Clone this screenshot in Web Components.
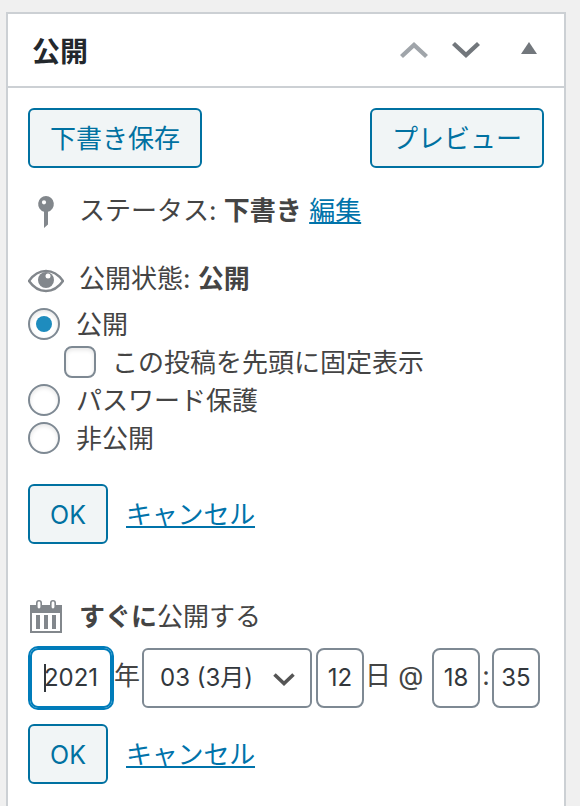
<!DOCTYPE html>
<html lang="ja">
<head>
<meta charset="utf-8">
<title>公開</title>
<style>
    html, body{
        height:100%;
        margin:0;
    }
    body{
        background:#f0f0f0;
        color:#444;
        font:26px/38px Inter, "Noto Sans CJK JP", sans-serif;
        overflow:hidden;
    }
</style>
</head>
<body>
<publish-box>
    <span slot="title">公開</span>
    <button-row>
        <wp-button style="--width:174px">下書き保存</wp-button>
        <wp-button style="--width:174px">プレビュー</wp-button>
    </button-row>
    <misc-row icon="key" style="margin-top:23px">ステータス: <b>下書き</b> <wp-link>編集</wp-link></misc-row>
    <misc-row icon="eye" style="margin-top:28px">公開状態: <b>公開</b></misc-row>
    <choice-item checked style="margin-top:6px">公開</choice-item>
    <choice-item type="checkbox">この投稿を先頭に固定表示</choice-item>
    <choice-item>パスワード保護</choice-item>
    <choice-item>非公開</choice-item>
    <confirm-row style="margin-top:27px"></confirm-row>
    <misc-row icon="calendar" style="margin-top:53px"><b>すぐに</b>公開する</misc-row>
    <date-row></date-row>
    <confirm-row style="margin-top:16px"></confirm-row>
</publish-box>
<script>
// Clase base: cada componente solo define su template y sus estilos
class BaseElement extends HTMLElement{
    constructor(){
        super();
        this.attachShadow({mode:"open"});
    }
    connectedCallback(){
        const template = document.createElement('template');
        template.innerHTML = `${this.getStyles()}${this.getTemplate()}`;
        this.shadowRoot.appendChild(template.content.cloneNode(true));
    }
}

class PublishBox extends BaseElement{
    getTemplate(){
        return `
            <header>
                <h2><slot name="title"></slot></h2>
                <svg class="up" width="28" height="18" viewBox="0 0 28 18"><path d="M1.5 15.500 14 4 26.500 15.500"/></svg>
                <svg class="down" width="28" height="18" viewBox="0 0 28 18"><path d="M1.5 2.500 14 14 26.500 2.500"/></svg>
                <svg class="toggle" width="16" height="12" viewBox="0 0 16 12"><path d="M8 0 16 12H0z"/></svg>
            </header>
            <section><slot></slot></section>
        `;
    }
    getStyles(){
        return `
        <style>
            :host{
                display:block;
                box-sizing:border-box;
                width:560px;
                height:820px;
                margin:0 0 0 6px;
                border:2px solid #ccd0d4;
                background:#fff;
                transform:translateY(12px);
            }
            header{
                display:flex;
                align-items:center;
                height:72px;
                padding:0 27px 0 24px;
                border-bottom:2px solid #ccd0d4;
            }
            h2{
                flex:1;
                margin:0;
                padding-top:4px;
                color:#23282d;
                font-size:28px;
                font-weight:700;
            }
            path{
                fill:none;
                stroke:#72777c;
                stroke-width:4.4;
            }
            .up path{
                stroke:#a0a5aa;
            }
            .down{
                margin:0 41px 0 24px;
            }
            .toggle{
                margin-top:-4px;
            }
            .toggle path{
                fill:#72777c;
                stroke:none;
            }
            section{
                padding:20px 20px 0;
            }
        </style>
        `;
    }
}
customElements.define('publish-box', PublishBox);

class ButtonRow extends BaseElement{
    getTemplate(){
        return `<slot></slot>`;
    }
    getStyles(){
        return `
        <style>
            :host{
                display:flex;
                justify-content:space-between;
            }
        </style>
        `;
    }
}
customElements.define('button-row', ButtonRow);

class WpButton extends BaseElement{
    getTemplate(){
        return `<button type="button"><slot></slot></button>`;
    }
    getStyles(){
        return `
        <style>
            :host{
                display:block;
            }
            button{
                display:block;
                box-sizing:border-box;
                width:var(--width, 80px);
                height:60px;
                padding:2px 0 0;
                border:2px solid #0071a1;
                border-radius:6px;
                background:#f1f5f6;
                color:#0071a1;
                font:inherit;
            }
        </style>
        `;
    }
}
customElements.define('wp-button', WpButton);

class WpLink extends BaseElement{
    getTemplate(){
        return `<a href="#"><slot></slot></a>`;
    }
    getStyles(){
        return `
        <style>
            :host{
                display:inline;
            }
            a{
                color:#0073aa;
                text-decoration:underline;
                text-decoration-thickness:2px;
                text-decoration-skip-ink:none;
                text-underline-offset:2px;
            }
        </style>
        `;
    }
}
customElements.define('wp-link', WpLink);

const icons = {
    key:`<path fill-rule="evenodd" d="M18 3a8 8 0 0 1 2 15.700V31.500L16 35V18.700A8 8 0 0 1 18 3zM16 7.200a2.100 2.100 0 1 0 0 4.200 2.100 2.100 0 0 0 0-4.200z"/>`,
    eye:`<path d="M1 20Q8 10 18 10T35 20Q28 30 18 30T1 20z" fill="none" stroke="#82878c" stroke-width="2.400"/><circle cx="18" cy="19" r="8"/><circle cx="20" cy="15" r="2.500" fill="#fff"/>`,
    calendar:`<path fill-rule="evenodd" d="M2 6h32v28H2zM4 14v18h28V14z"/><path d="M8 16h4v14H8zM16 16h4v14h-4zM24 16h4v14h-4z"/><path d="M11 8V4M25 8V4" stroke="#82878c" stroke-width="6" stroke-linecap="round"/><path d="M11 8V4M25 8V4" stroke="#fff" stroke-width="2.800" stroke-linecap="round"/>`
};

class MiscRow extends BaseElement{
    getTemplate(){
        return `
            <svg width="36" height="36" viewBox="0 0 36 36" fill="#82878c">${icons[this.getAttribute('icon')]}</svg>
            <p><slot></slot></p>
        `;
    }
    getStyles(){
        return `
        <style>
            :host{
                display:flex;
                align-items:center;
                gap:15px;
                height:40px;
            }
            p{
                margin:0;
            }
        </style>
        `;
    }
}
customElements.define('misc-row', MiscRow);

class ChoiceItem extends BaseElement{
    getTemplate(){
        return `<label><i></i><span><slot></slot></span></label>`;
    }
    getStyles(){
        return `
        <style>
            :host{
                display:block;
            }
            :host([type="checkbox"]){
                padding-left:36px;
            }
            label{
                display:flex;
                align-items:center;
                gap:16px;
                height:38px;
            }
            span{
                margin-top:2px;
            }
            i{
                display:grid;
                place-items:center;
                box-sizing:border-box;
                width:32px;
                height:32px;
                border:2px solid #7e8993;
                border-radius:50%;
                box-shadow:inset 0 2px 4px rgba(0,0,0,.1);
            }
            :host([type="checkbox"]) i{
                border-radius:8px;
            }
            :host([checked]) i::before{
                content:"";
                width:16px;
                height:16px;
                border-radius:50%;
                background:#1e8cbe;
            }
        </style>
        `;
    }
}
customElements.define('choice-item', ChoiceItem);

class ConfirmRow extends BaseElement{
    getTemplate(){
        return `
            <wp-button>OK</wp-button>
            <wp-link>キャンセル</wp-link>
        `;
    }
    getStyles(){
        return `
        <style>
            :host{
                display:flex;
                align-items:center;
                gap:18px;
            }
            wp-button{
                font-size:25px;
            }
            wp-link{
                padding-top:2px;
                letter-spacing:-.2px;
            }
        </style>
        `;
    }
}
customElements.define('confirm-row', ConfirmRow);

class DateField extends BaseElement{
    getTemplate(){
        return `<slot></slot>`;
    }
    getStyles(){
        return `
        <style>
            :host{
                display:flex;
                align-items:center;
                justify-content:center;
                box-sizing:border-box;
                width:48px;
                height:60px;
                border:2px solid #7e8993;
                border-radius:8px;
                color:#32373c;
                font-size:24px;
                white-space:pre;
            }
            :host([year]){
                width:82px;
                margin:0 2px;
                border-color:#007cba;
                box-shadow:0 0 0 2px #007cba;
            }
            /* cursor de texto */
            :host([year])::before{
                content:"";
                width:2px;
                height:28px;
                margin-right:-2px;
                background:#32373c;
            }
            :host([month]){
                justify-content:space-between;
                width:170px;
                padding:0 15px 0 16px;
                border-radius:6px;
            }
        </style>
        `;
    }
}
customElements.define('date-field', DateField);

class DateRow extends BaseElement{
    getTemplate(){
        return `
            <date-field year>2021</date-field>
            <span class="nen">年</span>
            <date-field month><span>03 (3月)</span><svg width="22" height="16" viewBox="0 0 22 16"><path d="M1.500 4.500 11 13.500 20.500 4.500" fill="none" stroke="#555" stroke-width="3.600"/></svg></date-field>
            <date-field class="day">12</date-field>
            <span class="at">日 @</span>
            <date-field>18</date-field>
            <span class="colon">:</span>
            <date-field>35</date-field>
        `;
    }
    getStyles(){
        return `
        <style>
            :host{
                display:flex;
                align-items:center;
                margin-top:11px;
            }
            span{
                white-space:pre;
            }
            .nen, .at, .colon{
                margin-top:-5px;
            }
            .nen{
                width:28px;
            }
            .day{
                margin-left:4px;
            }
            .at{
                width:67px;
                text-indent:1px;
            }
            .colon{
                width:12px;
                text-align:center;
            }
            .at + date-field{
                margin-left:1px;
            }
        </style>
        `;
    }
}
customElements.define('date-row', DateRow);
</script>
</body>
</html>
